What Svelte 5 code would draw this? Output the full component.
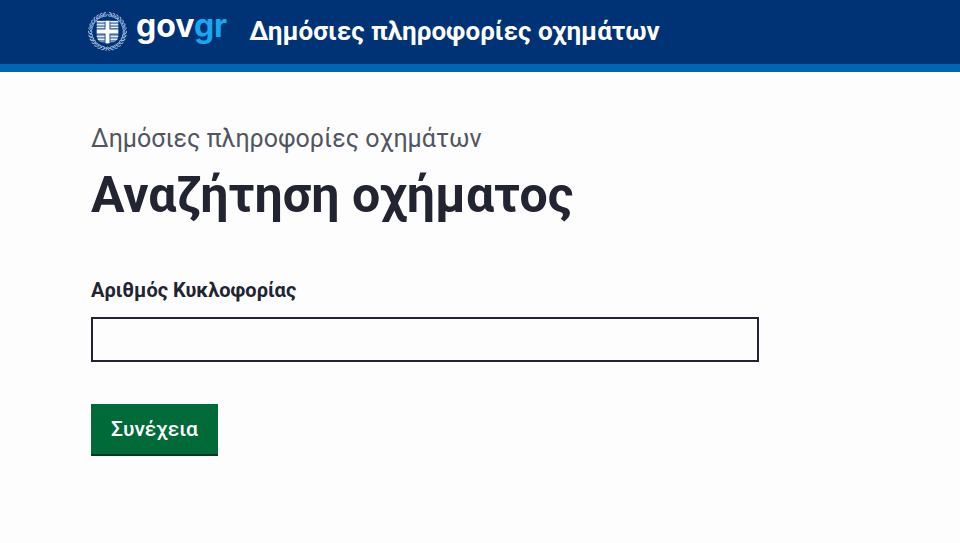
<script>
  const service = "Δημόσιες πληροφορίες οχημάτων";
  const leaves = Array.from({ length: 14 }, (_, i) => 8 + i * 12);

  let plate = "";
</script>

<svelte:head>
  <title>{service}</title>
</svelte:head>

<header>
  <div class="bar">
    <a class="logo" href="/" aria-label="gov.gr">
      <svg class="emblem" viewBox="0 0 42 42" aria-hidden="true">
        <g fill="none" stroke="#9db4d8">
          <circle cx="21" cy="21" r="17.5" stroke-width="1" stroke-dasharray="2 1" />
          {#each leaves as angle}
            <g transform="rotate({angle} 21 21)">
              <path d="M21 38q-2 3-4 2M21 38q-2-2-4-1" stroke-width="1" />
            </g>
            <g transform="rotate({-angle} 21 21)">
              <path d="M21 38q2 3 4 2M21 38q2-2 4-1" stroke-width="1" />
            </g>
          {/each}
          <path d="M17 39l4-2 4 2M19 41l2-3 2 3" stroke-width="1" />
        </g>
        <path
          d="M10 10h22v15c0 4-2 6-5 7c-3 0-5 1-6 2c-1-1-3-2-6-2c-3-1-5-3-5-7z"
          fill="#6f90c0"
        />
        <path
          d="M10 11h22M10 14h22M10 17h22M10 26h22M11 29h20"
          stroke="#e6edf7"
          stroke-width="1.3"
        />
        <path d="M21 11v22M10 21h22" stroke="#26518f" stroke-width="6" />
        <path d="M21 10v23M10 21h22" stroke="#fff" stroke-width="4" />
      </svg>
      <span class="wordmark">gov<b>gr</b></span>
    </a>
    <a class="service" href="/">{service}</a>
  </div>
</header>

<main>
  <h1><span>{service}</span>Αναζήτηση οχήματος</h1>
  <form on:submit|preventDefault>
    <label for="plate">Αριθμός Κυκλοφορίας</label>
    <input id="plate" type="text" bind:value={plate} />
    <button type="submit">Συνέχεια</button>
  </form>
</main>

<style>
  :global(body) {
    margin: 0;
    background: #fdfdfd;
    color: #222531;
    font-family: Roboto, "Noto Sans", sans-serif;
  }
  header {
    background: #003375;
    border-bottom: 8px solid #0065b3;
  }
  .bar {
    display: flex;
    align-items: center;
    height: 64px;
    padding: 0 87px;
  }
  .logo {
    display: flex;
    align-items: center;
    gap: 8px;
    margin-right: 22px;
    padding-bottom: 2px;
    color: #fff;
    text-decoration: none;
  }
  .emblem {
    width: 41px;
    height: 41px;
  }
  .wordmark {
    padding-bottom: 10px;
    font: 700 32px/40px Inter, sans-serif;
  }
  .wordmark b {
    font-weight: 700;
    color: #18a8f0;
  }
  .service {
    padding-bottom: 2px;
    color: #fff;
    font-size: 26px;
    line-height: 32px;
    font-weight: 700;
    text-decoration: none;
  }
  main {
    max-width: 668px;
    padding: 48px 91px;
  }
  h1 {
    margin: 0 0 44px;
    font-size: 50px;
    line-height: 74px;
    font-weight: 700;
  }
  h1 span {
    display: block;
    color: #515561;
    font-size: 25px;
    line-height: 38px;
    font-weight: 400;
  }
  label {
    display: block;
    margin-bottom: 13px;
    font-size: 20px;
    line-height: 28px;
    font-weight: 700;
  }
  input {
    display: block;
    box-sizing: border-box;
    width: 100%;
    height: 45px;
    margin: 0 0 42px;
    padding: 4px 8px;
    border: 2px solid #222531;
    border-radius: 0;
    background: #fdfdfd;
    font: inherit;
    font-size: 20px;
  }
  button {
    padding: 11px 20px;
    border: 0;
    border-radius: 0;
    background: #006a39;
    box-shadow: 0 2px 0 #003b20;
    color: #fff;
    font: 500 21px/28px Roboto, "Noto Sans", sans-serif;
    cursor: pointer;
  }
</style>
